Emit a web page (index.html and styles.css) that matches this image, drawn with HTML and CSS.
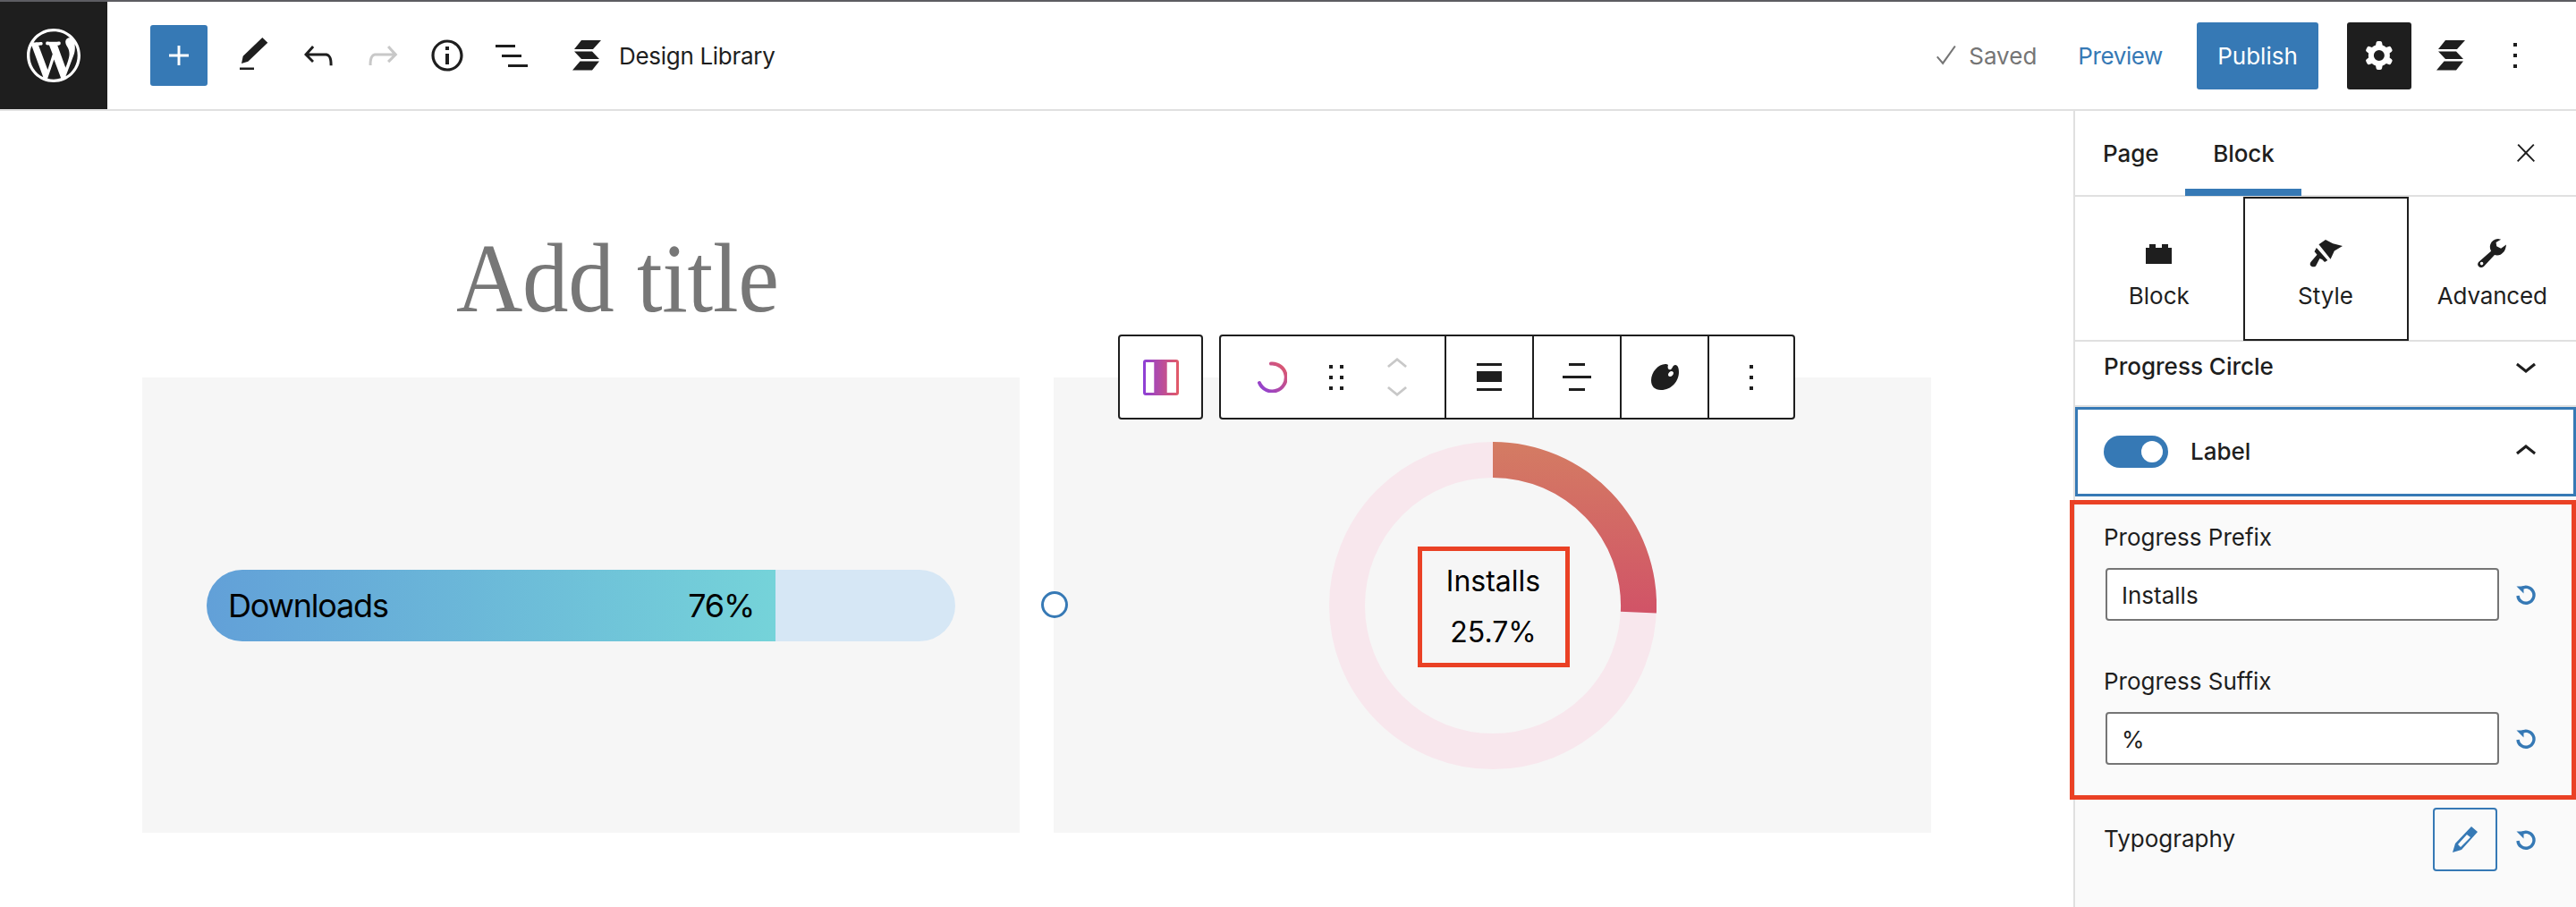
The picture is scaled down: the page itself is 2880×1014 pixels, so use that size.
FILE: index.html
```html
<!DOCTYPE html>
<html lang="en">
<head>
<meta charset="utf-8">
<title>Design Library</title>
<link rel="stylesheet" href="styles.css">
</head>
<body>
<div class="app">
  <header class="topbar">
    <div class="wp-box">
      <svg class="wp-logo" viewBox="0 0 20 20"><path d="M20 10c0-5.51-4.49-10-10-10C4.48 0 0 4.49 0 10c0 5.52 4.48 10 10 10 5.51 0 10-4.48 10-10zM7.78 15.37L4.37 6.22c.55-.02 1.17-.08 1.17-.08.5-.06.44-1.13-.06-1.11 0 0-1.45.11-2.37.11-.18 0-.37 0-.58-.01C4.12 2.69 6.87 1.11 10 1.11c2.33 0 4.45.87 6.05 2.34-.68-.11-1.65.39-1.65 1.58 0 .74.45 1.36.9 2.1.35.61.55 1.36.55 2.46 0 1.49-1.4 5-1.4 5l-3.03-8.37c.54-.02.82-.17.82-.17.5-.05.44-1.25-.06-1.22 0 0-1.44.12-2.38.12-.87 0-2.33-.12-2.33-.12-.5-.03-.56 1.2-.06 1.22l.92.08 1.26 3.41zM17.41 10c.24-.64.74-1.87.43-4.25.7 1.29 1.05 2.71 1.05 4.25 0 3.29-1.73 6.24-4.4 7.78.97-2.59 1.94-5.2 2.92-7.78zM6.1 18.09C3.12 16.65 1.11 13.53 1.11 10c0-1.3.23-2.48.72-3.59C3.25 10.3 4.67 14.2 6.1 18.09zm4.03-6.63l2.58 6.98c-.86.29-1.76.45-2.71.45-.79 0-1.57-.11-2.29-.33.81-2.38 1.62-4.74 2.42-7.1z"/></svg>
    </div>
    <div class="tools">
      <button class="add-btn"><svg class="i40" viewBox="0 0 24 24"><path d="M18 11.2h-5.2V6h-1.6v5.2H6v1.6h5.2V18h1.6v-5.2H18z"/></svg></button>
      <svg class="pen" viewBox="0 0 32 36"><path d="M0 33.500h16v2.500H0zM25.300 0l6 5.700-22 21-7.300 2.300 1.700-8.300z"/></svg>
      <svg class="i48 undo" viewBox="0 0 24 24"><path d="M18.300 11.700c-.6-.6-1.400-.9-2.300-.9H6.700l2.900-3.300-1.100-1-4.500 5L8.500 16l1-1-2.700-2.700H16c.5 0 .9.2 1.300.5 1 1 1 3.400 1 4.500v.3h1.500v-.2c0-1.500 0-4.300-1.500-5.700z"/></svg>
      <svg class="i48 redo" viewBox="0 0 24 24"><path d="M15.600 6.500l-1.100 1 2.900 3.300H8c-.9 0-1.700.3-2.300.9-1.400 1.500-1.400 4.200-1.400 5.600v.2h1.500v-.3c0-1.100 0-3.500 1-4.500.3-.3.7-.5 1.300-.5h9.200L14.500 15l1.100 1.100 4.600-4.600-4.600-5z"/></svg>
      <svg class="i48 info" viewBox="0 0 24 24"><path d="M12 3.200c-4.800 0-8.800 3.900-8.800 8.800 0 4.800 3.900 8.800 8.800 8.800 4.800 0 8.800-3.900 8.800-8.800 0-4.800-4-8.800-8.800-8.800zm0 16c-4 0-7.200-3.300-7.200-7.200C4.800 8 8 4.800 12 4.800s7.200 3.300 7.200 7.200c0 4-3.200 7.200-7.200 7.200zM11 17h2v-6h-2v6zm0-8h2V7h-2v2z"/></svg>
      <svg class="i48 listv" viewBox="0 0 24 24"><path d="M3 6h11v1.500H3V6zm3.500 5.500h11V13h-11v-1.500zM21 17H10v1.500h11V17z"/></svg>
      <div class="lib">
        <svg class="stk" viewBox="0 0 32 34"><path d="M10 0h22l-9 10H2zM2 12.500h20l8 8.500H10zM8.500 23.500H30L22 33.500H0z"/></svg>
        <span class="lib-text">Design Library</span>
      </div>
    </div>
    <div class="actions">
      <span class="saved"><svg class="check" viewBox="0 0 24 22"><path d="M1 13l1.500-1.300L8 18 21 0l1.700 1L8.200 21.500z"/></svg>Saved</span>
      <span class="preview">Preview</span>
      <button class="publish">Publish</button>
      <button class="gear"><svg class="i48" viewBox="0 0 24 24"><path fill-rule="evenodd" d="M10.289 4.836A1 1 0 0111.275 4h1.306a1 1 0 01.987.836l.244 1.466c.787.26 1.503.679 2.108 1.218l1.393-.522a1 1 0 011.216.437l.653 1.13a1 1 0 01-.23 1.273l-1.148.944a6.025 6.025 0 010 2.435l1.149.946a1 1 0 01.23 1.272l-.653 1.13a1 1 0 01-1.216.437l-1.394-.522c-.605.54-1.32.958-2.108 1.218l-.244 1.466a1 1 0 01-.987.836h-1.306a1 1 0 01-.986-.836l-.244-1.466a5.995 5.995 0 01-2.108-1.218l-1.394.522a1 1 0 01-1.217-.436l-.653-1.131a1 1 0 01.23-1.272l1.149-.946a6.026 6.026 0 010-2.435l-1.148-.944a1 1 0 01-.23-1.272l.653-1.131a1 1 0 011.217-.437l1.393.522a5.994 5.994 0 012.108-1.218l.244-1.466zM14.929 12a3 3 0 11-6 0 3 3 0 016 0z"/></svg></button>
      <svg class="stk stk-r" viewBox="0 0 32 34"><path d="M10 0h22l-9 10H2zM2 12.500h20l8 8.500H10zM8.500 23.500H30L22 33.500H0z"/></svg>
      <svg class="i48 more" viewBox="0 0 24 24"><path d="M13 19h-2v-2h2v2zm0-6h-2v-2h2v2zm0-6h-2V5h2v2z"/></svg>
    </div>
  </header>
  <div class="body">
    <main class="canvas">
      <h1 class="title">Add title</h1>
      <div class="columns">
        <section class="card">
          <div class="bar">
            <div class="fill"><span>Downloads</span><span>76%</span></div>
          </div>
        </section>
        <section class="card">
          <div class="ring">
            <svg class="ring-svg" viewBox="0 0 366 366">
              <defs><linearGradient id="rg" x1="0" y1="0" x2="0" y2="1"><stop offset="0" stop-color="#d47c63"/><stop offset="1" stop-color="#d15367"/></linearGradient></defs>
              <circle cx="183" cy="183" r="163" fill="none" stroke="#f8e7ed" stroke-width="40"/>
              <path d="M183 0A183 183 0 0 1 365.900 191.600L325.900 189.700A143 143 0 0 0 183 40Z" fill="url(#rg)"/>
            </svg>
            <div class="ring-label"><span>Installs</span><span>25.7%</span></div>
          </div>
        </section>
        <span class="handle"></span>
      </div>
      <div class="block-toolbar">
        <div class="tb-box tb-single">
          <svg class="columns-ic" viewBox="0 0 40 40">
            <defs><linearGradient id="cg" x1="0" y1="0" x2="1" y2="0"><stop offset="0" stop-color="#8c3fd8"/><stop offset="1" stop-color="#e35a66"/></linearGradient></defs>
            <path fill="url(#cg)" fill-rule="evenodd" d="M3 0h34a3 3 0 0 1 3 3v34a3 3 0 0 1-3 3H3a3 3 0 0 1-3-3V3a3 3 0 0 1 3-3zM3 3v34h9.300V3zM26.700 3v34h10.300V3z"/>
          </svg>
        </div>
        <div class="tb-box">
          <div class="tb-group tb-first">
            <svg class="spin" viewBox="0 0 33 35">
              <defs><linearGradient id="sg" x1="0" y1="1" x2="1" y2="0"><stop offset="0" stop-color="#8c3fd8"/><stop offset="1" stop-color="#e35a66"/></linearGradient></defs>
              <path d="M15 2.500A15.500 15.500 0 1 1 2 24" fill="none" stroke="url(#sg)" stroke-width="4" stroke-linecap="round"/>
            </svg>
            <svg class="i48 drag" viewBox="0 0 24 24"><path d="M8 7h2V5H8v2zm0 6h2v-2H8v2zm0 6h2v-2H8v2zm6-14v2h2V5h-2zm0 8h2v-2h-2v2zm0 6h2v-2h-2v2z"/></svg>
            <div class="mover">
              <svg class="mv" viewBox="0 0 22 11"><path d="M0 9l11-9 11 9-1.800 2L11 3.500 1.800 11z"/></svg>
              <svg class="mv" viewBox="0 0 22 11"><path d="M22 2L11 11 0 2 1.800 0 11 7.500 20.200 0z"/></svg>
            </div>
          </div>
          <div class="tb-group tb-cell"><svg class="align" viewBox="0 0 28 31"><path d="M0 0h28v3H0zM0 9h28v12H0zM0 28h28v3H0z"/></svg></div>
          <div class="tb-group tb-cell"><svg class="align2" viewBox="0 0 32 31"><path d="M7 0h18v3H7zM0 14h32v3H0zM7 28h18v3H7z"/></svg></div>
          <div class="tb-group tb-cell"><svg class="palette" viewBox="0 0 31 29"><path fill-rule="evenodd" d="M19 1C18 4 19 7 22 6C24 5 24 1 27 1C30 1 31 5 31 9C31 19 23 29 11 29C4 29 0 25 0 18C0 9 8 0 16 0C17 0 18 0 19 1ZM23 8c-2 0-4 2-4 4 0 1 1 2 2 2 2 0 4-2 4-4 0-1-1-2-2-2z"/></svg></div>
          <div class="tb-group tb-cell tb-last"><svg class="i48" viewBox="0 0 24 24"><path d="M13 19h-2v-2h2v2zm0-6h-2v-2h2v2zm0-6h-2V5h2v2z"/></svg></div>
        </div>
      </div>
    </main>
    <aside class="sidebar">
      <div class="tabs">
        <span class="tab">Page</span>
        <span class="tab tab-on">Block</span>
        <svg class="close" viewBox="0 0 24 24"><path d="M13 11.800l6.100-6.300-1-1-6.100 6.200-6.100-6.200-1 1 6.100 6.300-6.500 6.700 1 1 6.500-6.600 6.500 6.600 1-1z"/></svg>
      </div>
      <div class="kinds">
        <div class="kind">
          <svg class="k-block" viewBox="0 0 29 22"><path d="M4 0h7v4h7V0h7v4h4v18H0V4h4z"/></svg>
          <span>Block</span>
        </div>
        <div class="kind kind-on">
          <svg class="k-style" viewBox="0 0 113 95"><path d="M32 18L55 2l25 13 33 8-28 17-13 28zM24 29l38 43-10 6-9-9-8-3-13 25c-3 4-14 4-18-1-3-4-2-9 1-13l21-24-9-11z"/></svg>
          <span>Style</span>
        </div>
        <div class="kind">
          <svg class="k-wrench" viewBox="0 0 98 98"><path fill-rule="evenodd" d="M70 0C58 1 48 8 44 18c-3 8-2 16 2 24L5 78c-6 6-6 13-1 17 5 5 12 4 17 0L58 55c6 2 14 2 20-1 10-5 18-14 20-34L80 33l-15-8-2-13 17-10zM14 79a5.500 5.500 0 1 1 0 11 5.500 5.500 0 0 1 0-11z"/></svg>
          <span class="adv">Advanced</span>
        </div>
      </div>
      <div class="panel-row">
        <span>Progress Circle</span>
        <svg class="i48" viewBox="0 0 24 24"><path d="M17.500 11.600L12 16l-5.500-4.400.9-1.200L12 14l4.500-3.600 1 1.200z"/></svg>
      </div>
      <div class="panel-open">
        <span class="toggle"><span class="knob"></span></span>
        <span class="open-label">Label</span>
        <svg class="i48" viewBox="0 0 24 24"><path d="M6.500 12.400L12 8l5.500 4.400-.9 1.200L12 10l-4.500 3.600-1-1.200z"/></svg>
      </div>
      <div class="settings">
        <div class="field">
          <label>Progress Prefix</label>
          <div class="field-row">
            <div class="input">Installs</div>
            <svg class="reset" viewBox="0 0 22 22"><path d="M5 4.500A9 9 0 1 1 2 12" fill="none" stroke="#3679b5" stroke-width="3.400"/><path d="M0.500 1.500h8v8z" fill="#3679b5"/></svg>
          </div>
        </div>
        <div class="field">
          <label>Progress Suffix</label>
          <div class="field-row">
            <div class="input">%</div>
            <svg class="reset" viewBox="0 0 22 22"><path d="M5 4.500A9 9 0 1 1 2 12" fill="none" stroke="#3679b5" stroke-width="3.400"/><path d="M0.500 1.500h8v8z" fill="#3679b5"/></svg>
          </div>
        </div>
        <div class="typo">
          <span>Typography</span>
          <button class="pencil"><svg class="pencil-ic" viewBox="0 0 28 29"><path fill-rule="evenodd" d="M21 0l7 6-18 20-10 3 3-10zM16 9L6 20l3 3 11-11z"/></svg></button>
          <svg class="reset" viewBox="0 0 22 22"><path d="M5 4.500A9 9 0 1 1 2 12" fill="none" stroke="#3679b5" stroke-width="3.400"/><path d="M0.500 1.500h8v8z" fill="#3679b5"/></svg>
        </div>
      </div>
      <div class="annotation"></div>
    </aside>
  </div>
</div>
</body>
</html>
```
FILE: styles.css
```css
* { box-sizing: border-box; }
html, body { margin: 0; padding: 0; background: #fff; }
body { font-family: "Inter", "Liberation Sans", sans-serif; color: #1e1e1e; font-size: 26px; }
svg { display: block; fill: currentColor; flex: none; }
button { border: 0; padding: 0; font: inherit; display: flex; align-items: center; justify-content: center; }

.app { width: 2880px; height: 1014px; overflow: hidden; display: flex; flex-direction: column; border-top: 2px solid #5d5d62; }

.topbar { height: 122px; flex: none; display: flex; align-items: center; border-bottom: 2px solid #e0e0e0; }
.wp-box { width: 120px; height: 120px; background: #1e1e1e; color: #fff; display: flex; align-items: center; justify-content: center; align-self: flex-start; }
.wp-logo { width: 60px; height: 62px; }
.tools { display: flex; align-items: center; margin-left: 48px; flex: 1; }
.add-btn { width: 64px; height: 68px; background: #3679b5; border-radius: 3px; color: #fff; }
.i40 { width: 40px; height: 40px; }
.i48 { width: 48px; height: 48px; }
.add-btn .i40 { width: 44px; height: 44px; }
.pen { width: 32px; height: 36px; margin-left: 36px; margin-top: -4px; }
.undo { margin-left: 32px; }
.redo { margin-left: 24px; color: #c8c8c8; }
.info { margin-left: 24px; }
.listv { margin-left: 24px; }
.lib { display: flex; align-items: center; margin-left: 44px; }
.stk { width: 32px; height: 34px; }
.lib-text { margin-left: 20px; font-size: 26px; letter-spacing: -.3px; }

.actions { display: flex; align-items: center; padding-right: 44px; }
.saved { display: flex; align-items: center; color: #757575; }
.check { width: 24px; height: 22px; margin-right: 13px; }
.preview { color: #3679b5; margin-left: 46px; letter-spacing: -.4px; }
.publish { width: 136px; height: 75px; margin-left: 38px; border-radius: 3px; background: #3679b5; color: #fff; }
.gear { width: 72px; height: 75px; margin-left: 32px; border-radius: 3px; background: #1e1e1e; color: #fff; }
.stk-r { margin-left: 28px; }
.more { margin-left: 32px; }

.body { flex: 1; display: flex; min-height: 0; }
.canvas { flex: 1; position: relative; padding: 0 159px; min-width: 0; }
.title { margin: 0; height: 298px; padding: 116px 0 0 351px; font-family: "Liberation Serif", serif; font-weight: 400; font-size: 103px; line-height: 120px; letter-spacing: -.3px; color: #777; transform: scaleY(1.06); transform-origin: left top; white-space: nowrap; }
.columns { position: relative; display: flex; gap: 38px; width: 2000px; }
.card { width: 981px; height: 509px; flex: none; background: #f6f6f6; display: flex; align-items: center; justify-content: center; }
.bar { width: 837px; height: 80px; border-radius: 40px; background: #d6e7f5; overflow: hidden; margin-top: 1px; }
.fill { width: 76%; height: 100%; padding: 0 24px; display: flex; align-items: center; justify-content: space-between; background: linear-gradient(90deg, #62a0d8, #75d3d9); color: #000; font-size: 36px; letter-spacing: -1.2px; }
.ring { position: relative; width: 366px; height: 366px; margin-top: 1px; }
.ring-svg { width: 366px; height: 366px; }
.ring-label { position: absolute; left: 99px; top: 117px; width: 170px; height: 135px; border: 5px solid #ea4125; display: flex; flex-direction: column; align-items: center; justify-content: center; color: #000; font-size: 32px; line-height: 57px; padding-bottom: 2px; }
.handle { position: absolute; left: 1005px; top: 239px; width: 30px; height: 30px; border: 3px solid #3679b5; border-radius: 50%; background: #fff; }

.block-toolbar { position: absolute; left: 1250px; top: 250px; display: flex; gap: 18px; }
.tb-box { height: 95px; display: flex; background: #fff; border: 2px solid #1e1e1e; border-radius: 4px; }
.tb-single { width: 95px; align-items: center; justify-content: center; }
.columns-ic { width: 40px; height: 40px; }
.tb-group { display: flex; align-items: center; height: 100%; }
.tb-first { width: 250px; padding-left: 41px; }
.tb-first .drag { margin-left: 31px; }
.spin { width: 33px; height: 35px; }
.mover { display: flex; flex-direction: column; gap: 21px; margin-left: 33px; color: #c8c8c8; }
.mv { width: 22px; height: 11px; }
.tb-cell { width: 98px; justify-content: center; border-left: 2px solid #1e1e1e; }
.tb-last { width: 96px; }
.align { width: 28px; height: 31px; }
.align2 { width: 32px; height: 31px; }
.palette { width: 31px; height: 29px; }

.sidebar { width: 562px; flex: none; position: relative; border-left: 2px solid #e0e0e0; background: #fff; display: flex; flex-direction: column; }
.tabs { height: 96px; flex: none; display: flex; align-items: center; border-bottom: 2px solid #e0e0e0; position: relative; }
.tab { font-weight: 500; margin-left: 31px; letter-spacing: -.1px; }
.tab-on { margin-left: 61px; }
.tab-on::after { content: ""; position: absolute; left: 123px; width: 130px; bottom: -1px; height: 8px; background: #3679b5; }
.close { width: 32px; height: 32px; margin-left: auto; margin-right: 40px; }
.kinds { height: 162px; flex: none; display: flex; border-bottom: 2px solid #e0e0e0; }
.kind { flex: 1; display: flex; flex-direction: column; align-items: center; justify-content: flex-start; padding-top: 47px; position: relative; }
.kind > span { position: absolute; top: 91px; line-height: 40px; }
.kind-on { flex: none; width: 185px; border: 2px solid #1e1e1e; margin-bottom: -1px; padding-top: 45px; }
.kind-on > span { top: 89px; }
.adv { letter-spacing: -.2px; }
.k-block { width: 29px; height: 22px; margin-top: 6px; }
.k-style { width: 37px; height: 32px; }
.k-wrench { width: 32px; height: 32px; }
.panel-row { height: 73px; flex: none; display: flex; align-items: center; justify-content: space-between; padding: 0 32px 17px 32px; font-weight: 500; border-bottom: 2px solid #e0e0e0; }
.panel-open { height: 100px; flex: none; display: flex; align-items: center; border: 3px solid #3679b5; padding: 0 29px; font-weight: 500; }
.toggle { width: 72px; height: 36px; border-radius: 18px; background: #3679b5; display: flex; align-items: center; justify-content: flex-end; padding-right: 6px; }
.knob { width: 24px; height: 24px; border-radius: 50%; background: #fff; }
.open-label { margin-left: 25px; flex: 1; margin-top: -2px; }
.settings { flex: 1; background: #fafafa; padding: 26px 45px 0 32px; }
.field { margin-bottom: 48px; }
.field label { display: block; line-height: 40px; margin-bottom: 14px; }
.field-row { display: flex; align-items: center; justify-content: space-between; padding-left: 2px; }
.input { width: 440px; height: 59px; background: #fff; border: 2px solid #757575; border-radius: 4px; display: flex; align-items: center; padding: 2px 0 0 16px; }
.reset { width: 22px; height: 22px; }
.typo { display: flex; align-items: center; }
.typo > span { flex: 1; margin-top: -3px; }
.pencil { width: 72px; height: 71px; background: transparent; border: 2px solid #3679b5; border-radius: 4px; color: #3679b5; margin-right: 21px; }
.pencil-ic { width: 28px; height: 29px; }
.annotation { position: absolute; left: -6px; top: 435px; width: 566px; height: 335px; border: 5px solid #ea4125; pointer-events: none; }
```
